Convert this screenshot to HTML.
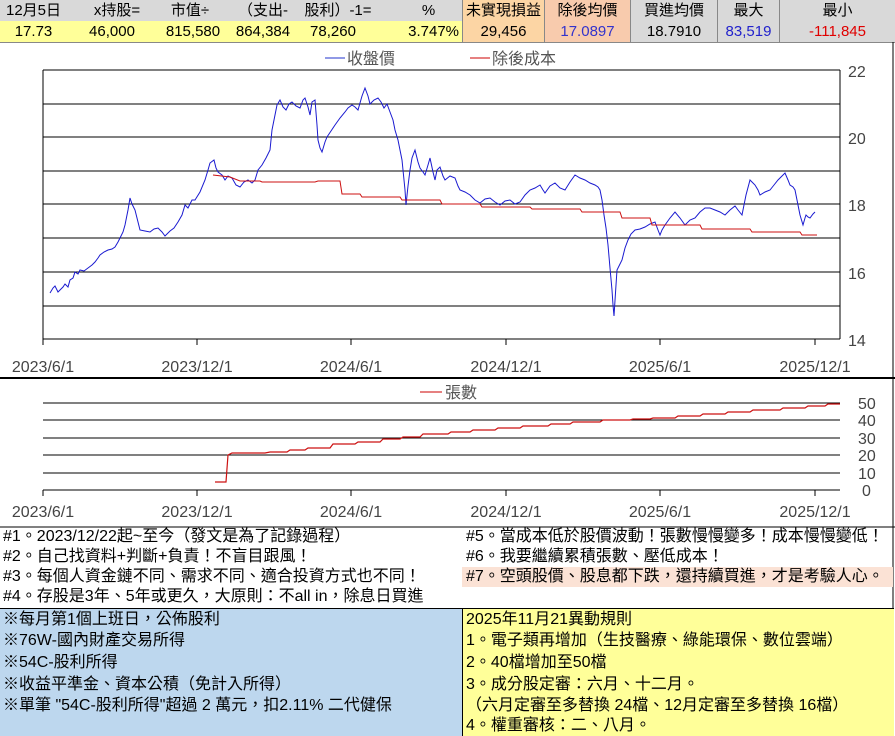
<!DOCTYPE html>
<html><head><meta charset="utf-8"><style>
body{margin:0;width:895px;height:736px;overflow:hidden;background:#fff;font-family:"Liberation Sans","Noto Sans CJK TC",sans-serif;}
.c{position:absolute;font-size:15px;text-align:center;line-height:21px;height:21px;box-sizing:border-box;color:#000;white-space:nowrap;}
.t{position:absolute;font-size:16px;line-height:20px;white-space:nowrap;}
</style></head><body>
<div style="position:absolute;left:0;top:0;width:462px;height:21px;background:#d9d9d9"></div>
<div style="position:absolute;left:0;top:21px;width:462px;height:21px;background:#ffff99"></div>
<div class="c" style="left:0;top:0;width:67px">12月5日</div>
<div class="c" style="left:72px;top:0;width:90px">x持股=</div>
<div class="c" style="left:150px;top:0;width:80px">市值÷</div>
<div class="c" style="left:228px;top:0;width:70px">（支出-</div>
<div class="c" style="left:298px;top:0;width:80px">股利）-1=</div>
<div class="c" style="left:395px;top:0;width:67px">%</div>
<div class="c" style="left:0;top:21px;width:67px">17.73</div>
<div class="c" style="left:67px;top:21px;width:90px">46,000</div>
<div class="c" style="left:155px;top:21px;width:76px">815,580</div>
<div class="c" style="left:228px;top:21px;width:70px">864,384</div>
<div class="c" style="left:298px;top:21px;width:70px">78,260</div>
<div class="c" style="left:380px;top:21px;width:82px;text-align:right;padding-right:3px">3.747%</div>
<div class="c" style="left:462px;top:0;width:82px;background:#fcd5a4;border-left:1px solid #888">未實現損益</div>
<div class="c" style="left:462px;top:21px;width:82px;background:#fcd5a4;border-left:1px solid #888">29,456</div>
<div class="c" style="left:544px;top:0;width:86px;background:#f8cbad;border-left:1px solid #888">除後均價</div>
<div class="c" style="left:544px;top:21px;width:86px;background:#f8cbad;border-left:1px solid #888;color:#3333cc">17.0897</div>
<div class="c" style="left:630px;top:0;width:87px;background:#d9d9d9;border-left:1px solid #888">買進均價</div>
<div class="c" style="left:630px;top:21px;width:87px;background:#d9d9d9;border-left:1px solid #888">18.7910</div>
<div class="c" style="left:717px;top:0;width:62px;background:#d9d9d9;border-left:1px solid #888">最大</div>
<div class="c" style="left:717px;top:21px;width:62px;background:#d9d9d9;border-left:1px solid #888;color:#2222cc">83,519</div>
<div class="c" style="left:779px;top:0;width:116px;background:#d9d9d9;border-left:1px solid #888">最小</div>
<div class="c" style="left:779px;top:21px;width:116px;background:#d9d9d9;border-left:1px solid #888;color:#e00000">-111,845</div>
<div style="position:absolute;left:0;top:42px;width:895px;height:1px;background:#888"></div>

<svg style="position:absolute;left:0;top:0" width="895" height="736" font-family="Liberation Sans, Noto Sans CJK TC, sans-serif">
<g stroke="#000" stroke-width="1">
<line x1="43" y1="70" x2="840" y2="70"/><line x1="43" y1="104" x2="840" y2="104"/><line x1="43" y1="137" x2="840" y2="137"/><line x1="43" y1="171" x2="840" y2="171"/><line x1="43" y1="204" x2="840" y2="204"/><line x1="43" y1="238" x2="840" y2="238"/><line x1="43" y1="272" x2="840" y2="272"/><line x1="43" y1="306" x2="840" y2="306"/><line x1="43" y1="339" x2="840" y2="339"/>
<line x1="43" y1="70" x2="43" y2="339"/><line x1="840" y1="70" x2="840" y2="339"/>
<line x1="43" y1="403" x2="840" y2="403"/><line x1="43" y1="420" x2="840" y2="420"/><line x1="43" y1="438" x2="840" y2="438"/><line x1="43" y1="455" x2="840" y2="455"/><line x1="43" y1="473" x2="840" y2="473"/><line x1="43" y1="490" x2="840" y2="490"/>
<line x1="43" y1="490" x2="43" y2="496"/><line x1="197" y1="490" x2="197" y2="496"/><line x1="351" y1="490" x2="351" y2="496"/><line x1="506" y1="490" x2="506" y2="496"/><line x1="660" y1="490" x2="660" y2="496"/><line x1="815" y1="490" x2="815" y2="496"/>
<line x1="43" y1="339" x2="43" y2="345"/><line x1="197" y1="339" x2="197" y2="345"/><line x1="351" y1="339" x2="351" y2="345"/><line x1="506" y1="339" x2="506" y2="345"/><line x1="660" y1="339" x2="660" y2="345"/><line x1="815" y1="339" x2="815" y2="345"/>
</g>
<line x1="0" y1="378" x2="895" y2="378" stroke="#000" stroke-width="2"/>
<line x1="893" y1="42" x2="893" y2="736" stroke="#000"/>
<g font-size="16" fill="#555">
<text x="347" y="64">收盤價</text>
<text x="492" y="64">除後成本</text>
<text x="445" y="398">張數</text>
</g>
<line x1="325" y1="58" x2="345" y2="58" stroke="#2233cc"/><line x1="470" y1="58" x2="490" y2="58" stroke="#c00"/><line x1="420" y1="392" x2="442" y2="392" stroke="#c00"/>
<g font-size="16" fill="#444">
<text x="848" y="77">22</text><text x="848" y="144">20</text><text x="848" y="211">18</text><text x="848" y="279">16</text><text x="848" y="346">14</text>
<text x="858" y="409">50</text><text x="858" y="426">40</text><text x="858" y="444">30</text><text x="858" y="461">20</text><text x="858" y="479">10</text><text x="862" y="496">0</text>
</g>
<g font-size="16" fill="#444" text-anchor="middle">
<text x="43" y="372">2023/6/1</text><text x="197" y="372">2023/12/1</text><text x="351" y="372">2024/6/1</text><text x="506" y="372">2024/12/1</text><text x="660" y="372">2025/6/1</text><text x="815" y="372">2025/12/1</text>
<text x="43" y="517">2023/6/1</text><text x="197" y="517">2023/12/1</text><text x="351" y="517">2024/6/1</text><text x="506" y="517">2024/12/1</text><text x="660" y="517">2025/6/1</text><text x="815" y="517">2025/12/1</text>
</g>
<polyline fill="none" stroke="#1a1ad0" stroke-width="1" points="50,293 53,288 55,286 58,292 60,290 63,287 65,284 68,287 70,280 73,278 75,272 78,274 80,270 84,271 88,268 92,265 95,262 98,258 100,255 104,252 108,250 112,249 115,247 118,242 120,238 123,232 125,225 128,210 130,198 132,204 135,210 138,222 140,230 145,231 150,232 154,229 158,228 162,232 165,236 168,233 170,231 174,228 178,222 182,215 185,205 188,208 192,200 195,200 200,192 205,180 208,170 210,163 214,160 216,168 218,172 222,175 225,180 228,176 232,178 236,185 240,187 244,182 248,180 252,183 255,180 258,170 262,165 266,158 270,150 272,130 275,115 277,105 280,100 283,107 286,110 289,104 292,102 296,106 300,108 303,100 305,98 308,107 310,115 312,102 315,100 317,125 318,140 320,148 322,152 325,142 327,137 331,131 335,125 340,118 345,112 348,108 352,105 355,107 358,110 362,96 365,88 368,96 370,104 374,100 378,98 381,102 384,108 387,104 390,112 393,120 395,130 398,140 400,150 402,160 403,170 405,190 406,205 408,186 410,170 412,158 415,150 418,162 420,168 423,172 425,175 428,165 430,158 433,172 435,180 437,170 440,167 443,176 445,180 450,176 455,178 458,186 460,190 465,192 470,195 475,200 480,203 485,199 490,198 495,202 500,205 505,201 510,200 515,204 520,202 525,195 530,190 535,188 540,185 543,190 545,193 550,186 555,183 560,188 565,190 570,182 575,175 580,178 585,180 590,183 595,185 598,187 600,190 602,200 604,215 606,228 608,245 610,268 612,290 613,305 614,316 616,285 617,270 620,264 622,260 625,248 628,240 631,234 635,230 640,229 645,227 650,224 655,222 658,230 660,235 662,230 665,225 670,218 675,212 680,218 685,225 690,220 695,218 700,212 705,208 710,208 715,210 720,212 725,215 730,210 735,206 738,210 742,215 746,195 750,180 752,182 755,185 758,190 760,195 765,192 770,190 774,185 778,180 782,176 785,173 788,180 790,185 793,187 795,190 797,200 800,215 803,225 805,218 806,215 808,217 810,218 813,214 815,212"/>
<polyline fill="none" stroke="#cc1111" stroke-width="1" points="213,175 230,177 240,181 260,181 262,182 315,182 318,181 340,181 342,194 360,194 362,197 400,197 402,200 440,200 442,204 480,204 482,207 530,207 532,209 580,209 582,212 620,212 622,218 650,218 652,225 700,225 702,229 750,229 752,232 800,232 802,235 817,235"/>
<polyline fill="none" stroke="#cc1111" stroke-width="1.2" points="215,482 226,482 228,455 232,453 265,453 270,452 287,452 290,450 305,450 308,448 330,448 333,444 355,444 358,442 380,442 383,439 400,439 403,437 420,437 423,434 448,434 451,432 470,432 473,430 495,430 498,428 520,428 523,426 548,426 551,424 570,424 573,422 600,422 603,420 630,420 633,419 650,419 653,418 675,418 678,416 700,416 703,414 725,414 728,412 750,412 753,410 780,410 783,408 805,408 808,406 825,406 828,404 840,404"/>
<line x1="0" y1="527" x2="895" y2="527" stroke="#000"/>
</svg>
<div style="position:absolute;left:462px;top:567px;width:431px;height:20px;background:#fbe2d5"></div>
<div class="t" style="left:3px;top:527px">#1。2023/12/22起~至今（發文是為了記錄過程）</div>
<div class="t" style="left:3px;top:547px">#2。自己找資料+判斷+負責！不盲目跟風！</div>
<div class="t" style="left:3px;top:567px">#3。每個人資金鏈不同、需求不同、適合投資方式也不同！</div>
<div class="t" style="left:3px;top:587px">#4。存股是3年、5年或更久，大原則：不all in，除息日買進</div>
<div class="t" style="left:466px;top:527px">#5。當成本低於股價波動！張數慢慢變多！成本慢慢變低！</div>
<div class="t" style="left:466px;top:547px">#6。我要繼續累積張數、壓低成本！</div>
<div class="t" style="left:466px;top:567px">#7。空頭股價、股息都下跌，還持續買進，才是考驗人心。</div>
<div style="position:absolute;left:0;top:608px;width:462px;height:128px;background:#bdd7ee;border-top:1px solid #000;box-sizing:border-box"></div>
<div style="position:absolute;left:462px;top:608px;width:432px;height:128px;background:#ffff99;border-top:1px solid #000;border-left:1px solid #000;box-sizing:border-box"></div>
<div class="t" style="left:3px;top:610px">※每月第1個上班日，公佈股利</div>
<div class="t" style="left:3px;top:631px">※76W-國內財產交易所得</div>
<div class="t" style="left:3px;top:653px">※54C-股利所得</div>
<div class="t" style="left:3px;top:675px">※收益平準金、資本公積（免計入所得）</div>
<div class="t" style="left:3px;top:696px">※單筆 "54C-股利所得"超過 2 萬元，扣2.11% 二代健保</div>
<div class="t" style="left:466px;top:610px">2025年11月21異動規則</div>
<div class="t" style="left:466px;top:631px">1。電子類再增加（生技醫療、綠能環保、數位雲端）</div>
<div class="t" style="left:466px;top:653px">2。40檔增加至50檔</div>
<div class="t" style="left:466px;top:675px">3。成分股定審：六月、十二月。</div>
<div class="t" style="left:466px;top:696px">（六月定審至多替換 24檔、12月定審至多替換 16檔）</div>
<div class="t" style="left:466px;top:716px">4。權重審核：二、八月。</div>
</body></html>
